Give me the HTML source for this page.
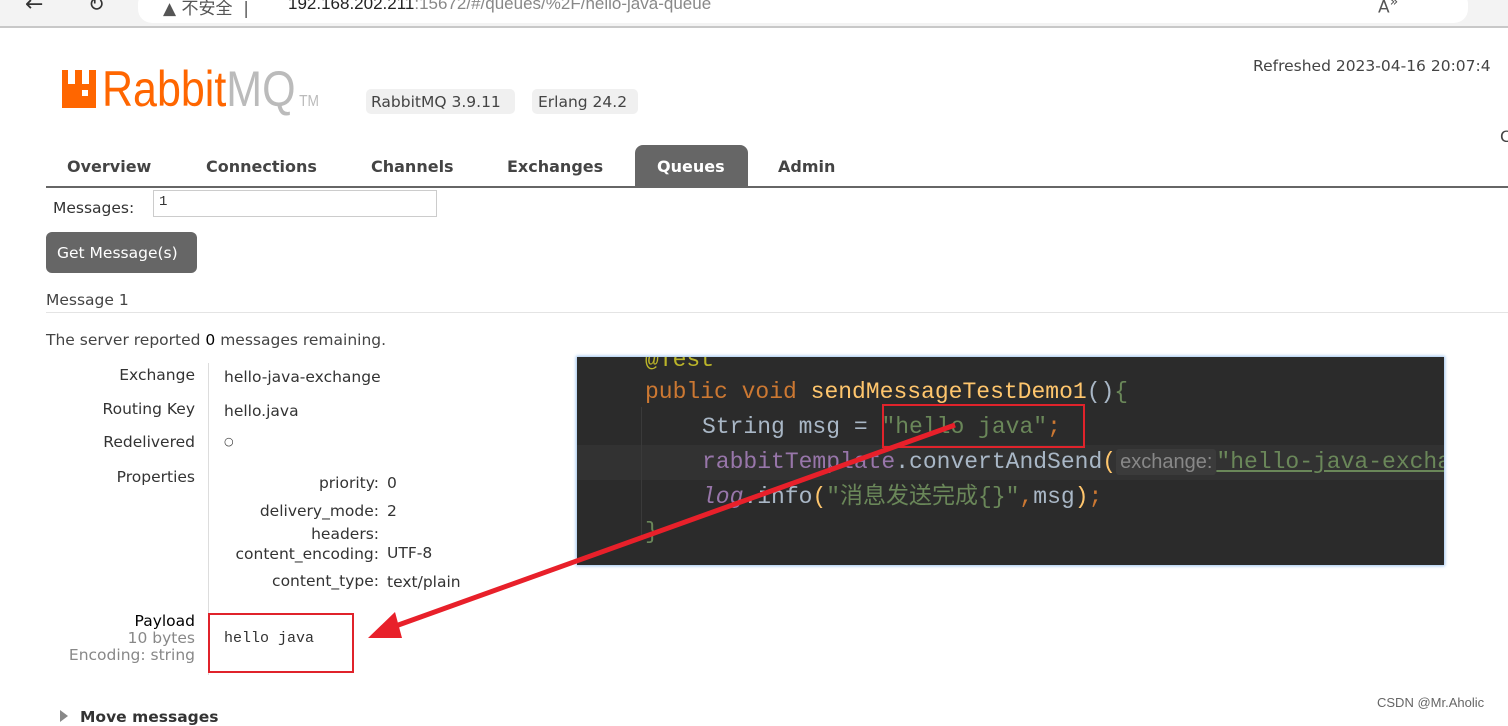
<!DOCTYPE html>
<html><head><meta charset="utf-8"><style>
*{margin:0;padding:0;box-sizing:border-box}
body{width:1508px;height:718px;overflow:hidden;background:#fff;font-family:"DejaVu Sans","Noto Sans CJK SC",sans-serif;color:#333;position:relative;font-size:15.5px}
.a{position:absolute;white-space:nowrap}
.r{text-align:right}
.mono{font-family:"Liberation Mono","Noto Sans CJK SC",monospace}
</style></head><body>
<div class="a" style="left:0;top:0;width:1508px;height:28px;background:#f3f3f3;border-bottom:2px solid #c8c8c8"></div>
<div class="a" style="left:138px;top:-10px;width:1330px;height:33px;background:#fff;border-radius:14px"></div>
<div class="a" style="left:25px;top:-8px;font-size:22px;color:#333">←</div>
<div class="a" style="left:88px;top:-8px;font-size:20px;color:#333">↻</div>
<div class="a" style="left:163px;top:-6px;font-size:17px;color:#555">▲ 不安全 &nbsp;|</div>
<div class="a" style="left:288px;top:-6px;font-size:17px;color:#222;font-family:'Liberation Sans'">192.168.202.211<span style="color:#888">:15672/#/queues/%2F/hello-java-queue</span></div>
<div class="a" style="left:1378px;top:-6px;font-size:17px;color:#555">A<sup>»</sup></div>

<div class="a" style="left:62px;top:70px;width:34px;height:38px;background:#f60"></div>
<div class="a" style="left:68px;top:70px;width:7px;height:14px;background:#fff"></div>
<div class="a" style="left:82px;top:70px;width:7px;height:14px;background:#fff"></div>
<div class="a" style="left:82px;top:90px;width:6px;height:6px;background:#fff"></div>
<div class="a" style="left:102px;top:60px;font-size:50px;color:#f60;font-family:'Liberation Sans';transform:scaleX(.86);transform-origin:left">Rabbit<span style="color:#bbb">MQ</span><span style="color:#bbb;font-size:16px"> TM</span></div>
<div class="a" style="left:366px;top:89px;width:149px;height:25px;padding:4px 5px;background:#f0f0f0;border-radius:5px;font-size:15.5px;color:#444">RabbitMQ 3.9.11</div>
<div class="a" style="left:532px;top:89px;width:106px;height:25px;padding:4px 6px;background:#f0f0f0;border-radius:5px;font-size:15.5px;color:#444">Erlang 24.2</div>
<div class="a" style="left:1253px;top:57px;font-size:15.5px;color:#444">Refreshed 2023-04-16 20:07:4</div>
<div class="a" style="left:1500px;top:127px;font-size:16px;color:#444">C</div>

<div class="a" style="left:46px;top:186px;width:1462px;height:2px;background:#666"></div>
<div class="a" style="left:635px;top:145px;width:113px;height:42px;background:#666;border-radius:8px 8px 0 0"></div>
<div class="a" style="top:157px;font-size:16px;font-weight:bold;color:#444;left:67px">Overview</div>
<div class="a" style="top:157px;font-size:16px;font-weight:bold;color:#444;left:206px">Connections</div>
<div class="a" style="top:157px;font-size:16px;font-weight:bold;color:#444;left:371px">Channels</div>
<div class="a" style="top:157px;font-size:16px;font-weight:bold;color:#444;left:507px">Exchanges</div>
<div class="a" style="top:157px;font-size:16px;font-weight:bold;color:#fff;left:657px">Queues</div>
<div class="a" style="top:157px;font-size:16px;font-weight:bold;color:#444;left:778px">Admin</div>

<div class="a" style="left:53px;top:199px">Messages:</div>
<div class="a mono" style="left:153px;top:190px;width:284px;height:27px;border:1px solid #ccc;font-size:14px;padding:3px 5px">1</div>
<div class="a" style="left:46px;top:232px;width:151px;height:41px;background:#666;border-radius:6px;color:#fff;padding:12px 11px">Get Message(s)</div>
<div class="a" style="left:46px;top:291px;color:#444">Message 1</div>
<div class="a" style="left:46px;top:312px;width:1462px;height:1px;background:#e4e4e4"></div>
<div class="a" style="left:46px;top:331px;color:#444">The server reported <span style="color:#000">0</span> messages remaining.</div>

<div class="a" style="left:208px;top:363px;width:1px;height:312px;background:#ddd"></div>
<div class="a r" style="right:1313px;top:366px">Exchange</div>
<div class="a" style="left:224px;top:368px">hello-java-exchange</div>
<div class="a r" style="right:1313px;top:400px">Routing Key</div>
<div class="a" style="left:224px;top:402px">hello.java</div>
<div class="a r" style="right:1313px;top:433px">Redelivered</div>
<div class="a" style="left:224px;top:435px;font-size:11px">○</div>
<div class="a r" style="right:1313px;top:468px">Properties</div>
<div class="a r" style="right:1129px;top:469px;line-height:28px">priority:<br>delivery_mode:<br></div>
<div class="a r" style="right:1129px;top:524px;line-height:20px">headers:<br>content_encoding:</div>
<div class="a r" style="right:1129px;top:572px">content_type:</div>
<div class="a" style="left:387px;top:469px;line-height:28px">0<br>2</div>
<div class="a" style="left:387px;top:544px">UTF-8</div>
<div class="a" style="left:387px;top:573px">text/plain</div>
<div class="a r" style="right:1313px;top:613px;line-height:17px;color:#000">Payload<br><span style="color:#888">10 bytes<br>Encoding: string</span></div>
<div class="a" style="left:208px;top:613px;width:146px;height:60px;border:2px solid #e0232b"></div>
<div class="a" style="left:224px;top:630px;font-size:15px;font-family:'Liberation Mono',monospace">hello java</div>
<div class="a" style="left:60px;top:710px;width:0;height:0;border-left:8px solid #888;border-top:6px solid transparent;border-bottom:6px solid transparent"></div>
<div class="a" style="left:80px;top:708px;font-weight:bold">Move messages</div>
<div class="a" style="left:1377px;top:695px;font-size:13px;color:#666;font-family:'Liberation Sans'">CSDN @Mr.Aholic</div>

<div class="a" style="left:577px;top:357px;width:867px;height:208px;background:#2b2b2b;box-shadow:0 0 3px 1px #9cc3ef;overflow:hidden">
<div class="a" style="left:0;top:88px;width:870px;height:35px;background:#323232"></div>
<div class="a" style="left:64px;top:50px;width:1px;height:130px;background:#3a3a3a"></div>
<div class="mono a" style="left:68px;top:-14px;font-size:23px;color:#bbb529;line-height:35px">@Test</div>
<div class="mono a" style="left:68px;top:18px;font-size:23px;line-height:35px;color:#cc7832">public void <span style="color:#ffc66d">sendMessageTestDemo1</span><span style="color:#a9b7c6">()</span><span style="color:#6a8759">{</span></div>
<div class="mono a" style="left:125px;top:53px;font-size:23px;line-height:35px;color:#a9b7c6">String msg = <span style="color:#6a8759">"hello java"</span><span style="color:#cc7832">;</span></div>
<div class="mono a" style="left:125px;top:88px;font-size:23px;line-height:35px;color:#a9b7c6"><span style="color:#9876aa">rabbitTemplate</span>.convertAndSend<span style="color:#ffc66d">(</span><span style="font-family:'Liberation Sans';font-size:20px;color:#888;background:#3b3b3b;padding:2px 4px;border-radius:3px">exchange:</span><span style="color:#6a8759;text-decoration:underline">"hello-java-exchange"</span></div>
<div class="mono a" style="left:125px;top:123px;font-size:23px;line-height:35px;color:#a9b7c6"><i style="color:#9876aa">log</i>.info<span style="color:#ffc66d">(</span><span style="color:#6a8759">"消息发送完成{}"</span><span style="color:#cc7832">,</span>msg<span style="color:#ffc66d">)</span><span style="color:#cc7832">;</span></div>
<div class="mono a" style="left:68px;top:158px;font-size:23px;line-height:35px;color:#6a8759">}</div>
</div>
<div class="a" style="left:882px;top:404px;width:203px;height:44px;border:2px solid #e0232b"></div>
<svg class="a" style="left:0;top:0" width="1508" height="718"><line x1="955" y1="425" x2="390" y2="628" stroke="#e8202a" stroke-width="5"/><polygon points="368,638 395,612 402,638" fill="#e8202a"/></svg>
</body></html>
